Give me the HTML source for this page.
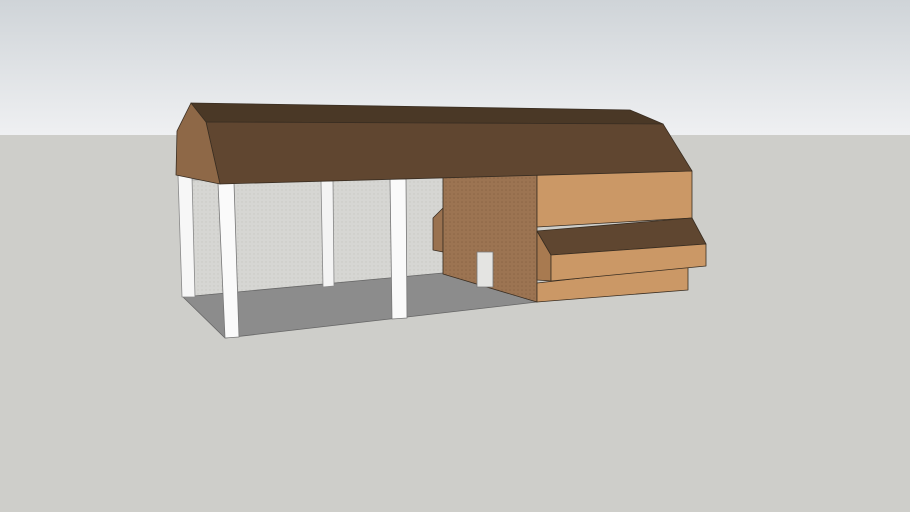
<!DOCTYPE html>
<html><head><style>
html,body{margin:0;padding:0;width:910px;height:512px;overflow:hidden;background:#cececa}
svg{display:block}
</style></head><body>
<svg width="910" height="512" viewBox="0 0 910 512" xmlns="http://www.w3.org/2000/svg">
<defs>
<linearGradient id="sky" x1="0" y1="0" x2="0" y2="1">
<stop offset="0" stop-color="#cfd4d8"/>
<stop offset="1" stop-color="#eff0f2"/>
</linearGradient>
<pattern id="dots" width="4" height="4" patternUnits="userSpaceOnUse">
<rect width="4" height="4" fill="#d6d6d3"/><circle cx="2" cy="2" r="0.7" fill="#c8c8c4"/>
</pattern>
<pattern id="bdots" width="4" height="4" patternUnits="userSpaceOnUse">
<rect width="4" height="4" fill="#9c7452"/><circle cx="2" cy="2" r="0.8" fill="#8c6646"/>
</pattern>
</defs>
<rect width="910" height="135" fill="url(#sky)"/>
<rect y="135" width="910" height="377" fill="#cececa"/>
<g stroke="#3a2e22" stroke-width="0.8" stroke-linejoin="round">
<polygon points="190,180 443,177 443,274 190,297" fill="url(#dots)" stroke="#999"/>
<polygon points="183,297 443,273 537,302 225,338" fill="#8c8c8c" stroke="#666"/>
<polygon points="178,175 192,177 195,297 182,297" fill="#f7f7f7" stroke="#888"/>
<polygon points="321,181 333,181 334,286 323,287" fill="#f4f4f4" stroke="#888"/>
<polygon points="433,218 443,208 443,252 433,250" fill="#9a7250"/>
<polygon points="443,177 537,175 537,302 443,274" fill="url(#bdots)"/>
<rect x="477" y="252" width="16" height="35" fill="#e4e4e2" stroke="#777"/>
<polygon points="218,183 234,183 239,337 225,338" fill="#fafafa" stroke="#777"/>
<polygon points="390,179 406,179 407,318 392,319" fill="#fafafa" stroke="#777"/>
<polygon points="537,174 692,171 692,218 537,227" fill="#cb9866"/>
<polygon points="537,283 688,266 688,290 537,302" fill="#cb9866"/>
<polygon points="537,231 551,255 551,281 537,280" fill="#a87a50"/>
<polygon points="537,231 692,218 706,244 551,255" fill="#5f4630"/>
<polygon points="551,255 706,244 706,266 551,281" fill="#cb9866"/>
<polygon points="191,103 630,110 663,124 206,122" fill="#4a3826"/>
<polygon points="206,122 663,124 692,171 220,184" fill="#604630"/>
<polygon points="191,103 206,122 220,184 176,175 177,131" fill="#8e6847"/>
</g>
</svg>
</body></html>
